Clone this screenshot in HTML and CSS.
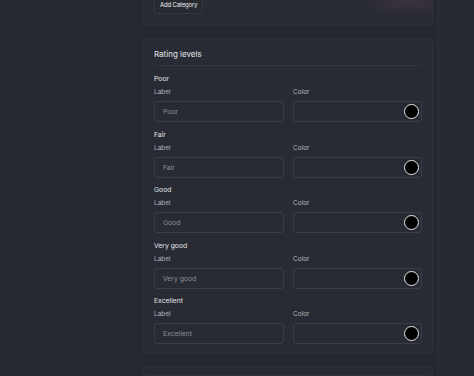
FILE: index.html
```html
<!DOCTYPE html>
<html>
<head>
<meta charset="utf-8">
<link rel="stylesheet" href="styles.css">
</head>
<body>
<div class="layout">
  <main class="main">
    <section class="card card-top">
      <button class="btn">Add Category</button>
    </section>
    <section class="card">
      <h2 class="card-title">Rating levels</h2>
      <div class="levels">
        <div class="level">
          <h3 class="level-name">Poor</h3>
          <div class="fields">
            <div class="field"><span class="field-label">Label</span><div class="input">Poor</div></div>
            <div class="field"><span class="field-label">Color</span><div class="input color"><span class="swatch"></span></div></div>
          </div>
        </div>
        <div class="level">
          <h3 class="level-name">Fair</h3>
          <div class="fields">
            <div class="field"><span class="field-label">Label</span><div class="input">Fair</div></div>
            <div class="field"><span class="field-label">Color</span><div class="input color"><span class="swatch"></span></div></div>
          </div>
        </div>
        <div class="level">
          <h3 class="level-name">Good</h3>
          <div class="fields">
            <div class="field"><span class="field-label">Label</span><div class="input">Good</div></div>
            <div class="field"><span class="field-label">Color</span><div class="input color"><span class="swatch"></span></div></div>
          </div>
        </div>
        <div class="level">
          <h3 class="level-name">Very good</h3>
          <div class="fields">
            <div class="field"><span class="field-label">Label</span><div class="input">Very good</div></div>
            <div class="field"><span class="field-label">Color</span><div class="input color"><span class="swatch"></span></div></div>
          </div>
        </div>
        <div class="level">
          <h3 class="level-name">Excellent</h3>
          <div class="fields">
            <div class="field"><span class="field-label">Label</span><div class="input">Excellent</div></div>
            <div class="field"><span class="field-label">Color</span><div class="input color"><span class="swatch"></span></div></div>
          </div>
        </div>
      </div>
    </section>
    <section class="card card-next"></section>
  </main>
  <aside class="side"></aside>
</div>
</body>
</html>
```
FILE: styles.css
```css
html, body {
  margin: 0;
  padding: 0;
  background: #252830;
  height: 100%;
  overflow: hidden;
}
body {
  font-family: Inter, "Liberation Sans", sans-serif;
  color: #e2e3e6;
}
.layout {
  display: flex;
  height: 376px;
}
.main {
  width: 291px;
  margin-left: 142px;
  margin-top: -11px;
  display: flex;
  flex-direction: column;
  gap: 12px;
}
.side {
  margin-left: 5px;
  flex: 1;
  border-left: 1px solid #2c2f37;
  background: #252830;
}
.card {
  background: #282b33;
  border: 1px solid #2f323b;
  border-radius: 4px;
  padding: 10px 11px 9px;
}
.card-top {
  padding-top: 6px;
  padding-bottom: 11px;
  background: radial-gradient(ellipse 50px 14px at 265px 12px, rgba(120, 70, 90, 0.25), transparent), #282b33;
}
.btn {
  font-family: inherit;
  font-size: 5.9px;
  letter-spacing: -0.1px;
  line-height: 8px;
  color: #f0f0f2;
  background: #262930;
  border: 1px solid #363942;
  border-radius: 4px;
  height: 18px;
  padding: 0 5px;
  display: block;
  margin: 0;
}
.card-title {
  margin: 0;
  font-size: 8px;
  font-weight: 400;
  line-height: 10px;
  color: #e6e7ea;
  padding-bottom: 6px;
  border-bottom: 1px solid #32353e;
}
.levels {
  display: flex;
  flex-direction: column;
  gap: 7.5px;
  margin-top: 8px;
}
.level-name {
  margin: 0;
  font-size: 6.8px;
  font-weight: 400;
  line-height: 10px;
  color: #e4e5e8;
}
.fields {
  display: grid;
  grid-template-columns: 130px 129px;
  column-gap: 9px;
  margin-top: 3px;
}
.field {
  display: flex;
  flex-direction: column;
  gap: 4px;
}
.field-label {
  font-size: 6.5px;
  line-height: 10px;
  color: #b4b6bb;
}
.input {
  height: 19px;
  border: 1px solid #3a3d46;
  border-radius: 3px;
  background: #282b33;
  font-size: 6.8px;
  color: #8d9096;
  display: flex;
  align-items: center;
  padding-left: 8px;
}
.input.color {
  justify-content: flex-end;
  padding-right: 2px;
}
.swatch {
  width: 13px;
  height: 13px;
  border-radius: 50%;
  background: #000;
  border: 1.5px solid #e8e8e8;
}
.card-next {
  height: 40px;
  padding: 0;
}
```
